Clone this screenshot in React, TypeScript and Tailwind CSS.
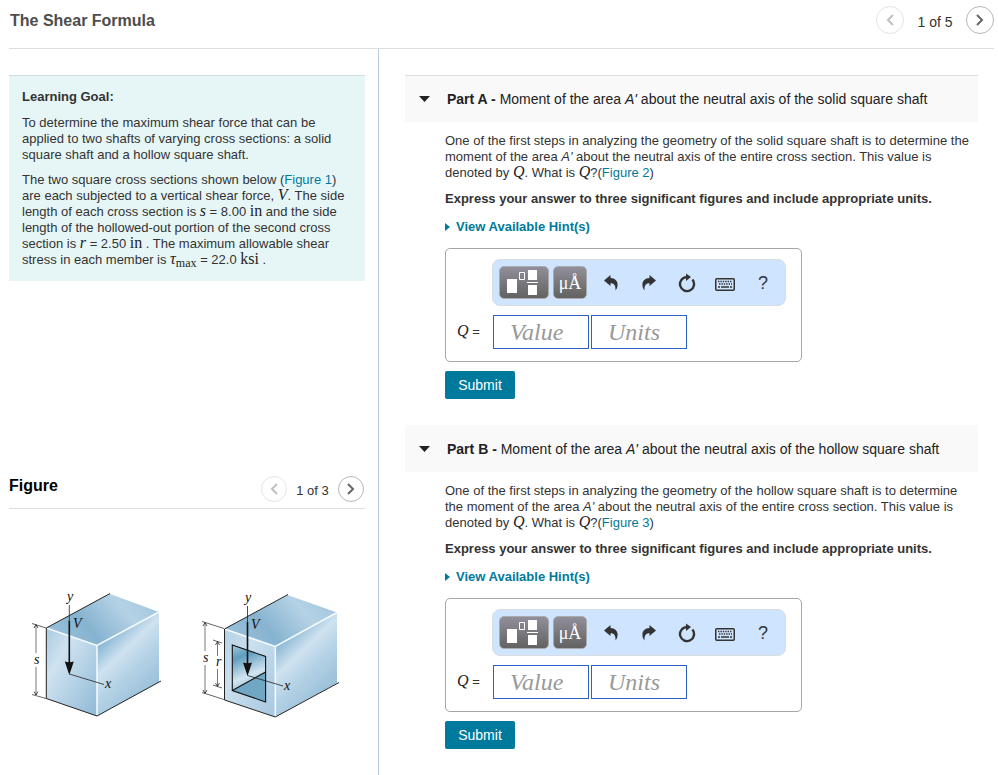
import type { ReactNode } from "react";

function Chevron({ dir }: { dir: "left" | "right" }) {
    return <svg width="8" height="12" viewBox="0 0 8 12" fill="none" stroke="currentColor" strokeWidth="2">
        <path d={dir === "left" ? "M7 1 L2 6 L7 11" : "M1 1 L6 6 L1 11"} />
    </svg>
}

function Pager({ label, small }: { label: string, small?: boolean }) {
    const size = small ? "size-[26px]" : "size-7";
    return <div className="flex items-center">
        <button disabled aria-label="Previous" className={`${size} flex items-center justify-center rounded-full border border-[#e4e4e4] text-[#c0c0c0]`}>
            <Chevron dir="left" />
        </button>
        <span className={small ? "w-[51px] pt-1 text-center text-[13px]" : "w-[62px] pt-1 text-center text-sm"}>{label}</span>
        <button aria-label="Next" className={`${size} flex items-center justify-center rounded-full border border-[#b8b8b8] text-[#666]`}>
            <Chevron dir="right" />
        </button>
    </div>
}

function M({ children, up }: { children: ReactNode, up?: boolean }) {
    return <span className={`font-["Liberation_Serif",serif] text-base leading-3 text-[#222] ${up ? "" : "italic"}`}>{children}</span>
}

function FigLink({ n }: { n: number }) {
    return <a href="#figure" className="text-[#007a9c]">Figure {n}</a>
}

const serif = "Liberation Serif, serif";

function Figure() {
    return <svg role="img" aria-label="Solid and hollow square shafts" className="mt-[71px] block" width="356" height="150" viewBox="9 580 356 150">
        <defs>
            <linearGradient id="front" x1="0" y1="0" x2="1" y2="1">
                <stop offset="0" stopColor="#a9cbe1" />
                <stop offset="0.3" stopColor="#cfe2f0" />
                <stop offset="0.6" stopColor="#b4d1e5" />
                <stop offset="1" stopColor="#8fb9d5" />
            </linearGradient>
            <linearGradient id="frontLight" x1="0" y1="0" x2="1" y2="1">
                <stop offset="0" stopColor="#b4d1e5" />
                <stop offset="0.35" stopColor="#cbdfee" />
                <stop offset="1" stopColor="#a6c8df" />
            </linearGradient>
            <linearGradient id="top" x1="0" y1="0.6" x2="1" y2="0.2">
                <stop offset="0" stopColor="#98c0d9" />
                <stop offset="0.3" stopColor="#86b3d0" />
                <stop offset="0.7" stopColor="#b5d2e5" />
                <stop offset="1" stopColor="#a0c5dd" />
            </linearGradient>
            <linearGradient id="side" gradientUnits="userSpaceOnUse" x1="97" y1="645" x2="150" y2="700">
                <stop offset="0" stopColor="#85b4d1" />
                <stop offset="0.3" stopColor="#cfe2f0" />
                <stop offset="0.55" stopColor="#b5d2e5" />
                <stop offset="1" stopColor="#93bcd7" />
            </linearGradient>
            <linearGradient id="sideHollow" gradientUnits="userSpaceOnUse" x1="275" y1="645" x2="328" y2="700">
                <stop offset="0" stopColor="#85b4d1" />
                <stop offset="0.3" stopColor="#cfe2f0" />
                <stop offset="0.55" stopColor="#b5d2e5" />
                <stop offset="1" stopColor="#93bcd7" />
            </linearGradient>
            <linearGradient id="hole" x1="0" y1="0" x2="0.3" y2="1">
                <stop offset="0" stopColor="#a5c8dc" />
                <stop offset="0.3" stopColor="#5f9dbf" />
                <stop offset="0.75" stopColor="#d2e5f1" />
                <stop offset="1" stopColor="#9cc3da" />
            </linearGradient>
        </defs>

        {/* solid shaft */}
        <path d="M46.3 628 L109.5 593.7 L159 612 L97 645.5 Z" fill="url(#top)" />
        <path d="M46.3 628 L97 645.5 V716 L46.3 698.5 Z" fill="url(#front)" />
        <path d="M97 645.5 L159 612 V682 L97 716 Z" fill="url(#side)" />
        <path d="M46.3 628 L97 645.5 L159 612 M97 645.5 V715" fill="none" stroke="#f6fbff" strokeWidth="1.5" />
        <path d="M110 593.5 L46.3 628 V698.5 L97 716 L161 681" fill="none" stroke="#222" strokeWidth="1" />
        <path d="M32 623.5 L46 628 M32 694.5 L46 698.5" stroke="#222" strokeWidth="0.7" />
        <path d="M36 625 V653 M36 667 V695" stroke="#555" strokeWidth="0.8" />
        <path d="M34 628 L36 624.5 L38 628 M34 691.5 L36 695 L38 691.5" fill="none" stroke="#222" strokeWidth="0.8" />
        <path d="M69.3 605 V622 M69.3 674 L104 684.5" stroke="#222" strokeWidth="0.8" />
        <path d="M69.3 621 V664" stroke="#111" strokeWidth="1.6" />
        <path d="M64.8 661.5 Q69.3 663 73.8 661.5 L69.3 675 Z" fill="#111" />

        {/* hollow shaft */}
        <path d="M224.5 629 L287.5 595 L337 612.5 L275.3 646.5 Z" fill="url(#top)" />
        <path d="M224.5 629 L275.3 646.5 V717 L224.5 700 Z" fill="url(#frontLight)" />
        <path d="M275.3 646.5 L337 612.5 V683 L275.3 717 Z" fill="url(#sideHollow)" />
        <path d="M224.5 629 L275.3 646.5 L337 612.5 M275.3 646.5 V716" fill="none" stroke="#f6fbff" strokeWidth="1.5" />
        <path d="M288 594.5 L224.5 629 V700 L275.3 717 L339 682.5" fill="none" stroke="#222" strokeWidth="1" />
        <path d="M232.3 645 L265.6 656.5 V672 L232.3 690.5 Z" fill="url(#hole)" />
        <path d="M265.6 672 V702 L232.3 690.5 Z" fill="#70a7c5" />
        <path d="M232.3 645 L265.6 656.5 V702 L232.3 690.5 Z M232.3 690.5 L265.6 672" fill="none" stroke="#111" strokeWidth="1.1" />
        <path d="M202 621.5 L224 628.5 M202 692.5 L224 699.5 M213 640 L222 643 M213 685 L222 688" stroke="#222" strokeWidth="0.7" />
        <path d="M205 623 V651 M205 665 V693 M217.5 642 V656 M217.5 669 V686" stroke="#555" strokeWidth="0.8" />
        <path d="M203 626 L205 622.5 L207 626 M203 690 L205 693.5 L207 690 M215.5 645 L217.5 641.5 L219.5 645 M215.5 683 L217.5 686.5 L219.5 683" fill="none" stroke="#222" strokeWidth="0.8" />
        <path d="M247.5 606 V623 M247.5 675.5 L283 686" stroke="#222" strokeWidth="0.8" />
        <path d="M247.5 622 V665" stroke="#111" strokeWidth="1.6" />
        <path d="M243 662.5 Q247.5 664 252 662.5 L247.5 676 Z" fill="#111" />

        <g fontFamily={serif} fontStyle="italic" fontSize="14" fill="#111">
            <text x="67" y="601">y</text>
            <text x="73" y="628">V</text>
            <text x="105" y="688">x</text>
            <text x="34" y="664">s</text>
            <text x="245" y="602">y</text>
            <text x="251" y="629">V</text>
            <text x="284" y="690">x</text>
            <text x="203" y="662">s</text>
            <text x="216" y="666">r</text>
        </g>
    </svg>
}

function Toolbar() {
    const dark = "flex h-[33px] items-center justify-center rounded-[5px] border border-[#aaa] bg-linear-to-b from-[#918f9b] to-[#626262] text-white";
    const tool = "flex h-8 w-[38px] items-center justify-center text-[#333]";
    return <div className="flex h-[47px] w-[294px] items-center rounded-lg border border-[#d8dde2] bg-[#cfe4ff] pl-1.5">
        <button aria-label="Templates" className={`${dark} w-[50px]`}>
            <svg width="34" height="28" viewBox="0 0 34 28" fill="#fff">
                <path d="M0 10h10v14h-10z M21 1h9v10h-9z M21 16h9v10h-9z M20 13h11v1h-11z" />
                <path d="M12.5 3.5h5v7h-5z" fill="none" stroke="#fff" />
            </svg>
        </button>
        <button aria-label="Units and symbols" className={`${dark} ml-1 mr-[5px] w-[34px] font-["Liberation_Serif",serif] text-lg`}>μÅ</button>
        <button aria-label="Undo" className={tool}>
            <svg width="14" height="16" viewBox="0 0 14 16" fill="currentColor"><path d="M0 5.5 L6.5 0 V3 C11 3 13.6 6 13.6 9.5 C13.6 12 12.8 14 11.5 15.5 C11.8 11 10.5 8.3 6.5 8.3 V11 Z" /></svg>
        </button>
        <button aria-label="Redo" className={tool}>
            <svg width="14" height="16" viewBox="0 0 14 16" fill="currentColor"><path d="M14 5.5 L7.5 0 V3 C3 3 0.4 6 0.4 9.5 C0.4 12 1.2 14 2.5 15.5 C2.2 11 3.5 8.3 7.5 8.3 V11 Z" /></svg>
        </button>
        <button aria-label="Reset" className={tool}>
            <svg width="18" height="20" viewBox="0 0 18 20"><path d="M14.4 6.6 A7 7 0 1 1 8.5 4.1" fill="none" stroke="currentColor" strokeWidth="2.4" /><path d="M8 0.5 L13 4 L8 8 Z" fill="currentColor" /></svg>
        </button>
        <button aria-label="Keyboard" className={tool}>
            <svg width="20" height="13" viewBox="0 0 20 13" className="mt-1" fill="none" stroke="currentColor">
                <rect x="0.75" y="0.75" width="18.5" height="11.5" rx="1" strokeWidth="1.5" />
                <path d="M3 3.5 H17 M4 6 H17" strokeWidth="1.4" strokeDasharray="1.4 1" />
                <path d="M3 9 H5 M6 9 H14 M15 9 H17" strokeWidth="1.6" />
            </svg>
        </button>
        <button aria-label="Help" className={`${tool} text-lg`}>?</button>
    </div>
}

function Part({ id, shape, figure, first, children }: { id: string, shape: string, figure: number, first?: boolean, children: ReactNode }) {
    const field = "h-[34px] w-24 border border-[#2d5fc4] px-4 font-[\"Liberation_Serif\",serif] text-2xl italic placeholder:text-[#999] focus:outline-none";
    return <section className="mb-[26px]">
        <h2 className={`flex h-[47px] items-center border-t bg-[#f9f9f9] pl-[14px] text-sm text-[#222] ${first ? "border-[#ddd]" : "border-[#f9f9f9]"}`}>
            <svg width="11" height="6" viewBox="0 0 11 6" className="mr-[17px]"><path d="M0 0 H11 L5.5 6 Z" fill="#222" /></svg>
            <span><b>Part {id} - </b>Moment of the area <i>A'</i> about the neutral axis of the {shape} square shaft</span>
        </h2>
        <div className="pl-10 pt-[11px]">
            <p>{children} <M>Q</M>. What is <M>Q</M>?(<FigLink n={figure} />)</p>
            <p className="mt-2.5 font-bold">Express your answer to three significant figures and include appropriate units.</p>
            <button className="mt-3 flex items-center gap-1.5 font-bold text-[#007a9c]">
                <svg width="5" height="8" viewBox="0 0 5 8"><path d="M0 0 L5 4 L0 8 Z" fill="currentColor" /></svg>
                View Available Hint(s)
            </button>
            <div className="mt-[13px] h-[114px] w-[357px] rounded-[5px] border border-[#a6a6a6] pt-2.5">
                <div className="pl-[46px]"><Toolbar /></div>
                <div className="mt-[9px] flex items-center gap-0.5">
                    <label htmlFor={`value-${id}`} className="w-[45px] pl-[11px]"><M>Q</M> =</label>
                    <input id={`value-${id}`} placeholder="Value" className={field} />
                    <input aria-label="Units" placeholder="Units" className={field} />
                </div>
            </div>
            <button className="mt-[9px] h-7 w-[70px] rounded-xs bg-[#007a9c] text-sm text-white">Submit</button>
        </div>
    </section>
}

export default function App() {
    return <div className={`flex min-h-screen flex-col bg-white font-["Liberation_Sans",Arial,sans-serif] text-[13px] leading-4 text-[#333]`}>
        <header className="ml-[9px] mr-1 flex h-[49px] items-start justify-between border-b border-[#ddd] pt-1.5">
            <h1 className="pl-px pt-[7px] text-base leading-4 font-bold text-[#4d4d4d]">The Shear Formula</h1>
            <Pager label="1 of 5" />
        </header>

        <div className="flex flex-1">
            <aside className="w-[379px] shrink-0 border-r border-[#b9cadb] pl-[9px] pr-[13px] pt-[26px]">
                <div className="h-[206px] border-t border-[#d5dede] bg-[#e6f6f6] px-[13px] pt-[13px]">
                    <h2 className="font-bold">Learning Goal:</h2>
                    <p className="mt-2.5">To determine the maximum shear force that can be applied to two shafts of varying cross sections: a solid square shaft and a hollow square shaft.</p>
                    <p className="mt-[9px]">
                        The two square cross sections shown below (<FigLink n={1} />) are each subjected to a vertical shear force, <M>V</M>. The side length of each cross section is <M>s</M> = 8.00 <M up>in</M> and the side length of the hollowed-out portion of the second cross section is <M>r</M> = 2.50 <M up>in</M> . The maximum allowable shear stress in each member is <M>τ</M><sub className={`font-["Liberation_Serif",serif] text-xs leading-[0] text-[#222]`}>max</sub> = 22.0 <M up>ksi</M> .
                    </p>
                </div>
                <div id="figure" className="mt-[184px] flex h-11 items-start justify-between border-b border-[#ddd] pt-[11px] pr-px">
                    <h2 className="pt-0.5 text-base leading-4 font-bold text-black">Figure</h2>
                    <Pager label="1 of 3" small />
                </div>
                <Figure />
            </aside>

            <main className="min-w-0 flex-1 pl-[26px] pr-5 pt-[26px]">
                <Part id="A" shape="solid" figure={2} first>
                    One of the first steps in analyzing the geometry of the solid square shaft is to determine the moment of the area <i>A'</i> about the neutral axis of the entire cross section. This value is denoted by
                </Part>
                <Part id="B" shape="hollow" figure={3}>
                    One of the first steps in analyzing the geometry of the hollow square shaft is to determine the moment of the area <i>A'</i> about the neutral axis of the entire cross section. This value is denoted by
                </Part>
            </main>
        </div>
    </div>
}
